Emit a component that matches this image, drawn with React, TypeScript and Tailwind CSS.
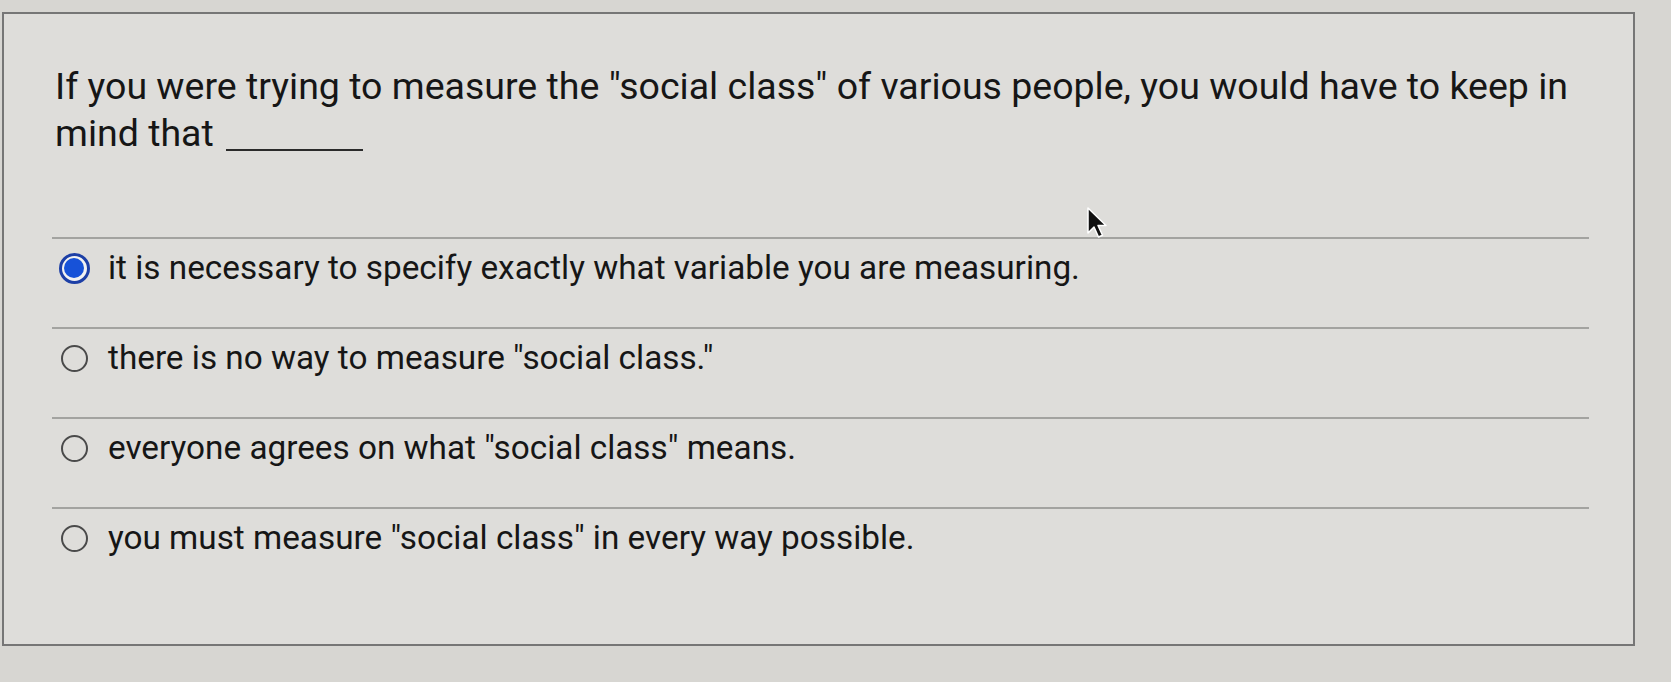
import React from "react";

const options = [
  { text: "it is necessary to specify exactly what variable you are measuring.", checked: true },
  { text: 'there is no way to measure "social class."', checked: false },
  { text: 'everyone agrees on what "social class" means.', checked: false },
  { text: 'you must measure "social class" in every way possible.', checked: false },
];

function Radio({ checked }: { checked: boolean }) {
  if (checked) {
    return (
      <span className="flex h-[31px] w-[31px] shrink-0 items-center justify-center rounded-full border-[3px] border-[#1d3fa6] bg-[#f2f2f2]">
        <span className="h-[20px] w-[20px] rounded-full bg-[#1752d8]" />
      </span>
    );
  }
  return <span className="h-[27px] w-[27px] shrink-0 rounded-full border-[2.5px] border-[#4a4a4a]" />;
}

export default function App() {
  return (
    <div className="relative h-[682px] w-[1671px] overflow-hidden bg-[#d7d6d2] font-['Roboto',sans-serif] text-[#161616]">
      <div className="ml-[2px] mt-[12px] h-[634px] w-[1633px] border-2 border-[#767676] bg-[#dedddA] pl-[48px] pr-[44px] pt-[49px]">
        {/* question */}
        <p className="-mr-[14px] pl-[3px] text-[37.5px] leading-[47px]">
          If you were trying to measure the "social class" of various people, you would have to keep in mind that
          <span className="ml-[12px] inline-block w-[137px] border-b-2 border-[#2a2a2a] align-[-5px]" />
        </p>

        {/* answers */}
        <div className="mt-[80px]">
          {options.map((o) => (
            <div key={o.text} className="flex h-[90px] items-start gap-[18px] border-t-2 border-[#a3a3a0] pl-[6px] pt-[13px]">
              <div className="flex h-[32px] w-[32px] items-center justify-center">
                <Radio checked={o.checked} />
              </div>
              <span className="text-[33.3px] leading-[32px]">{o.text}</span>
            </div>
          ))}
        </div>
      </div>

      {/* mouse pointer */}
      <svg className="absolute left-[1085px] top-[206px]" width="24" height="36" viewBox="0 0 24 36">
        <path d="M3 2 L3 27 L9 21 L13.5 31 L17.5 29.3 L13 19.5 L21 19.5 Z" fill="#111" stroke="#fff" strokeWidth="1.5" strokeLinejoin="round" />
      </svg>
    </div>
  );
}
